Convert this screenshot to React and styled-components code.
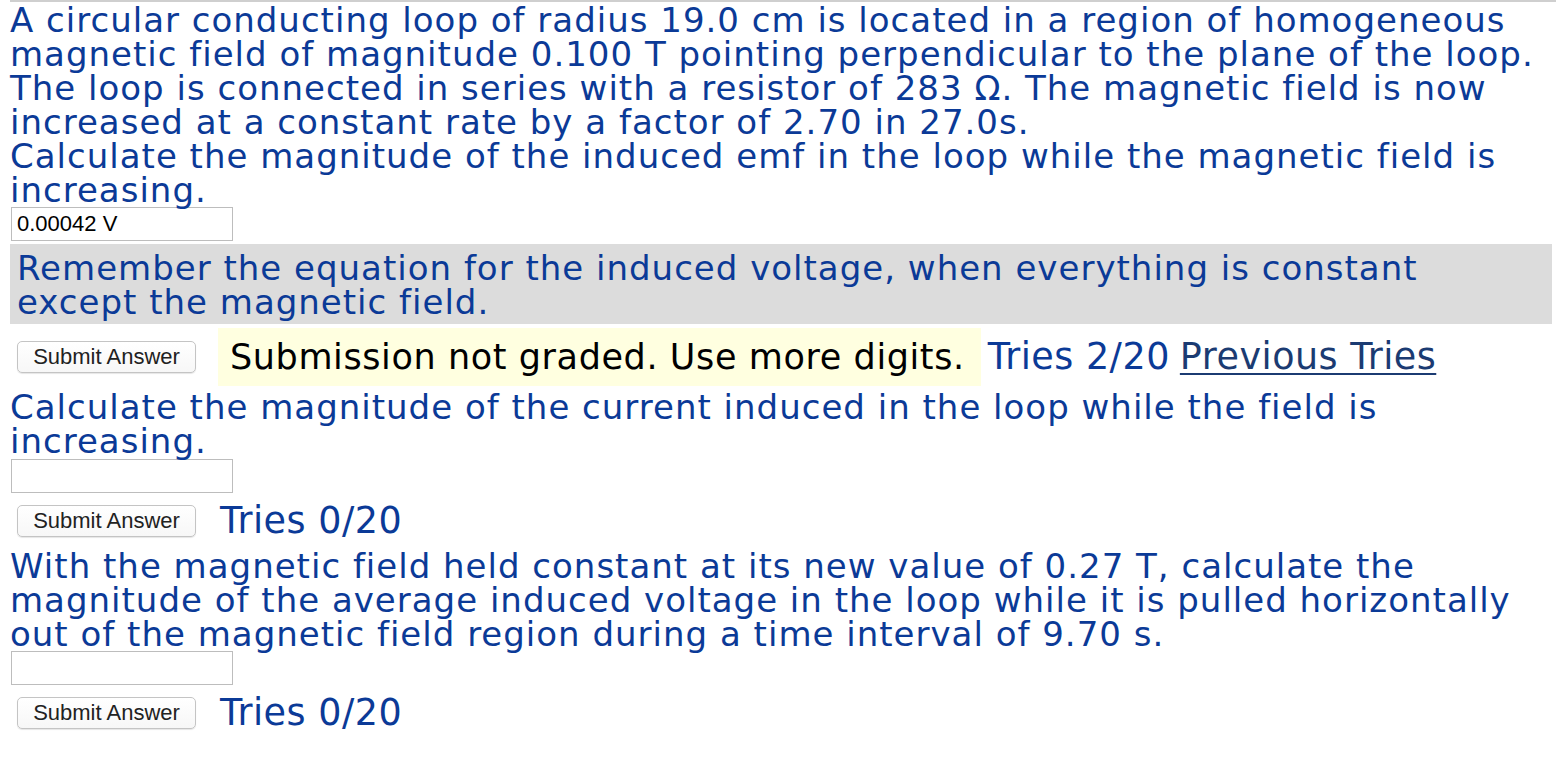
import React from "react";
import styled, { createGlobalStyle } from "styled-components";

const Global = createGlobalStyle`
  html, body { margin: 0; padding: 0; background: #fff; }
  body { font-family: "DejaVu Sans", Verdana, sans-serif; }
`;

const Page = styled.div`
  margin-left: 10px;
  border-top: 2px solid #cfcfcf;
  padding-top: 1px;
  color: #0b3a97;
  font-family: "DejaVu Sans", Verdana, sans-serif;
  font-size: 34px;
  line-height: 34px;
  letter-spacing: 1px;
`;

const Para = styled.div`
  margin: ${(p) => p.$mt || 0}px 0 0;
  white-space: nowrap;
`;

const AnswerInput = styled.input`
  display: block;
  box-sizing: border-box;
  width: 222px;
  height: 34px;
  margin: ${(p) => p.$mt || 0}px 0 0 1px;
  border: 1px solid #bdbdbd;
  padding: 0 5px;
  font-family: "Liberation Sans", Arial, sans-serif;
  font-size: 22px;
  letter-spacing: 0;
  color: #000;
  outline: none;
`;

const Hint = styled.div`
  margin: 3px 4px 0 0;
  background: #dcdcdc;
  padding: 7px 7px 5px;
  white-space: nowrap;
`;

const Row = styled.div`
  display: flex;
  align-items: center;
  margin-top: ${(p) => p.$mt || 0}px;
  height: ${(p) => p.$h}px;
`;

const SubmitButton = styled.button`
  box-sizing: border-box;
  margin-left: 7px;
  width: 179px;
  height: 32px;
  border: 1px solid #c4c4c4;
  border-radius: 5px;
  background: linear-gradient(#ffffff, #f7f7f7);
  box-shadow: 0 1px 1px rgba(0, 0, 0, 0.1);
  font-family: "Liberation Sans", Arial, sans-serif;
  font-size: 22px;
  letter-spacing: 0;
  color: #222;
  padding: 0;
  flex: none;
`;

const Feedback = styled.div`
  margin-left: 22px;
  background: #ffffe0;
  color: #000;
  height: 58px;
  display: flex;
  align-items: center;
  padding: 0 16px 0 12px;
  font-size: 35px;
  letter-spacing: 0.6px;
  white-space: nowrap;
`;

const Tries = styled.span`
  margin-left: ${(p) => p.$ml}px;
  font-size: 36.5px;
  letter-spacing: 0.5px;
  white-space: nowrap;
`;

const PrevLink = styled.a`
  margin-left: 10px;
  font-size: 36.5px;
  letter-spacing: 0.5px;
  color: #1b3b72;
  white-space: nowrap;
  text-decoration: underline;
  text-decoration-thickness: 2px;
  text-underline-offset: 4px;
`;

export default function App() {
  return (
    <>
      <Global />
      <Page>
        <Para>
          A circular conducting loop of radius 19.0 cm is located in a region of homogeneous
          <br />
          magnetic field of magnitude 0.100 T pointing perpendicular to the plane of the loop.
          <br />
          The loop is connected in series with a resistor of 283 Ω. The magnetic field is now
          <br />
          increased at a constant rate by a factor of 2.70 in 27.0s.
        </Para>
        <Para>
          Calculate the magnitude of the induced emf in the loop while the magnetic field is
          <br />
          increasing.
        </Para>
        <AnswerInput defaultValue="0.00042 V" />
        <Hint>
          Remember the equation for the induced voltage, when everything is constant
          <br />
          except the magnetic field.
        </Hint>
        <Row $mt={4} $h={58}>
          <SubmitButton>Submit Answer</SubmitButton>
          <Feedback>Submission not graded. Use more digits.</Feedback>
          <Tries $ml={7}>Tries 2/20</Tries>
          <PrevLink href="#">Previous Tries</PrevLink>
        </Row>
        <Para $mt={4}>
          Calculate the magnitude of the current induced in the loop while the field is
          <br />
          increasing.
        </Para>
        <AnswerInput $mt={1} />
        <Row $h={56}>
          <SubmitButton>Submit Answer</SubmitButton>
          <Tries $ml={24}>Tries 0/20</Tries>
        </Row>
        <Para>
          With the magnetic field held constant at its new value of 0.27 T, calculate the
          <br />
          magnitude of the average induced voltage in the loop while it is pulled horizontally
          <br />
          out of the magnetic field region during a time interval of 9.70 s.
        </Para>
        <AnswerInput />
        <Row $h={56}>
          <SubmitButton>Submit Answer</SubmitButton>
          <Tries $ml={24}>Tries 0/20</Tries>
        </Row>
      </Page>
    </>
  );
}
